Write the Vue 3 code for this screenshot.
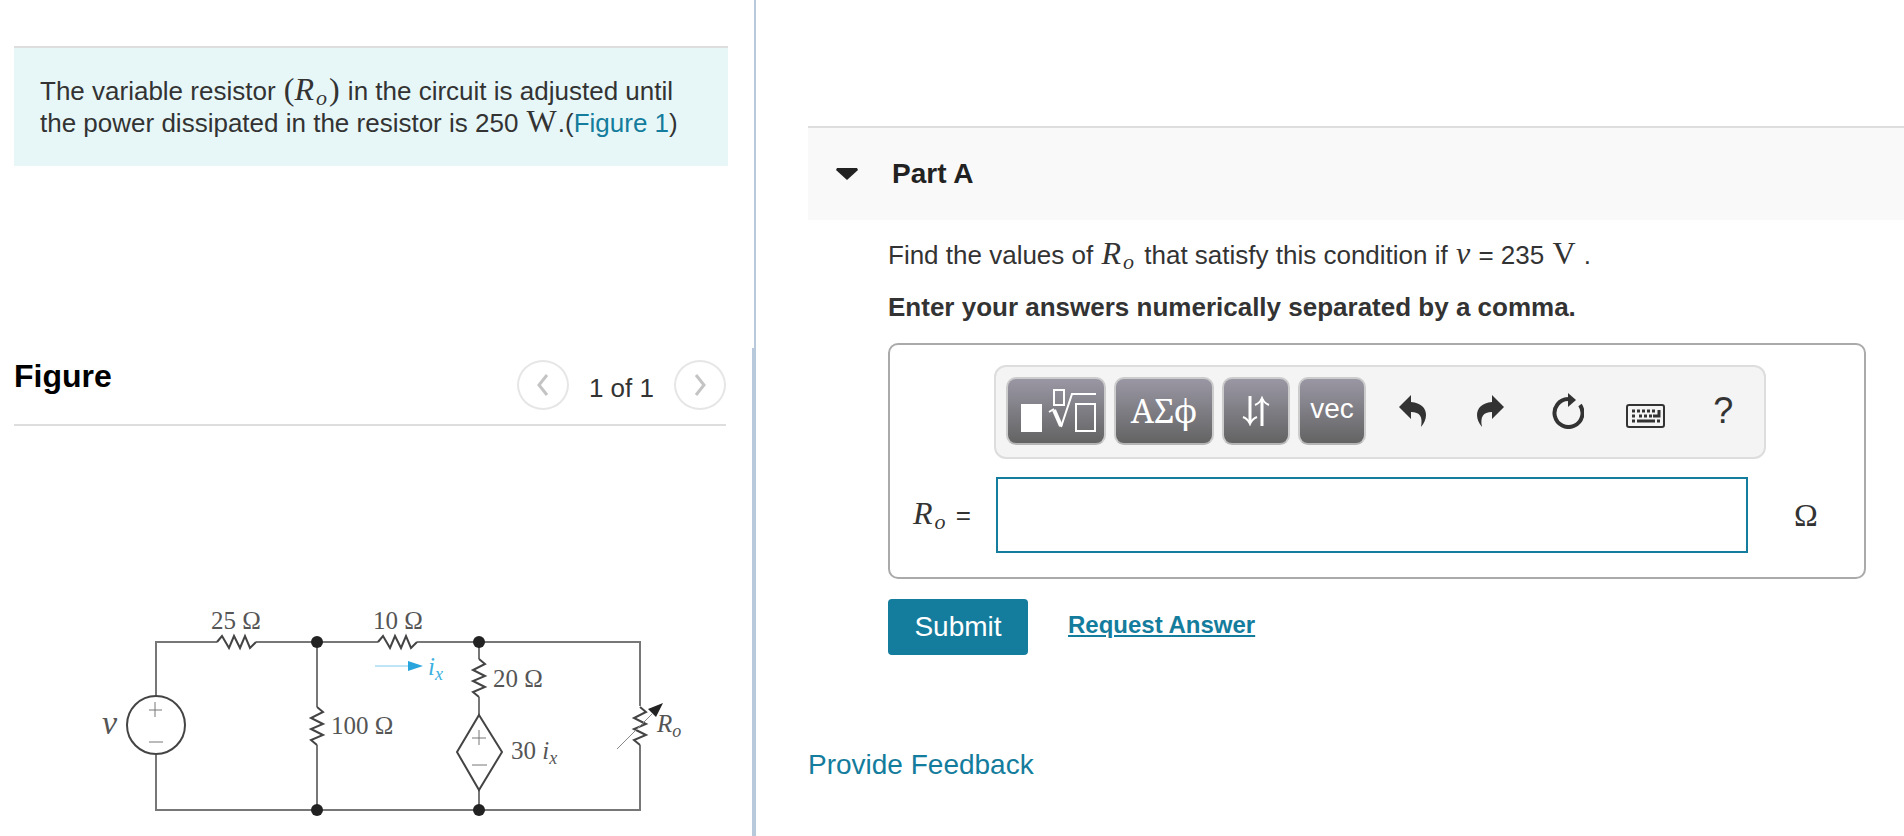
<template>
  <div class="page">
    <aside class="left-pane">
      <section class="problem-panel">
        <p class="problem">
          The variable resistor <span class="math"><span class="paren">(</span><i>R</i><sub>o</sub><span class="paren">)</span></span> in the circuit is adjusted until the power dissipated in the resistor is 250 <span class="math">W</span>.(<a href="#figure">Figure 1</a>)
        </p>
      </section>

      <section id="figure" class="figure-panel">
        <header class="figure-header">
          <h2>Figure</h2>
          <nav class="pager" aria-label="Figures">
            <button type="button" aria-label="Previous figure" @click="prevFigure">
              <svg width="16" height="24" viewBox="0 0 16 24"><path d="M12 2 L4 12 L12 22" /></svg>
            </button>
            <span>{{ figure }} of {{ figureCount }}</span>
            <button type="button" aria-label="Next figure" @click="nextFigure">
              <svg width="16" height="24" viewBox="0 0 16 24"><path d="M4 2 L12 12 L4 22" /></svg>
            </button>
          </nav>
        </header>

        <svg class="circuit" viewBox="14 580 712 250" role="img" aria-label="Circuit diagram">
          <!-- Wires -->
          <g class="wire">
            <path d="M156 697 V643 H217 M256 643 H378 M417 643 H640 V707 M640 746 V811 H156 V756" />
            <path d="M317 643 V708 M317 746 V811 M479 643 V660 M479 698 V716 M479 791 V811" />
          </g>

          <!-- Resistors -->
          <g class="part">
            <path v-for="r in horizontalResistors" :key="r" :transform="`translate(${r} 643)`"
                  d="M0 0 L5 -6 L12 6 L17 -6 L23 6 L28 -6 L33 6 L39 0" />
            <path v-for="r in verticalResistors" :key="r.x" :transform="`translate(${r.x} ${r.y})`"
                  d="M0 0 L6 5 L-6 11 L6 17 L-6 22 L6 28 L-6 33 L0 38" />
            <circle cx="156" cy="726" r="29" />
            <path d="M479 716 L502 753 L479 791 L457 753 Z" />
          </g>

          <!-- Source polarity -->
          <g class="sign">
            <path d="M149 711 H162 M155 703 V718 M149 743 H163" />
            <path d="M472 739 H486 M479 731 V746 M472 766 H487" />
          </g>

          <circle v-for="n in nodes" :key="`${n.x}-${n.y}`" class="node" :cx="n.x" :cy="n.y" r="6" />

          <!-- Current arrow -->
          <path class="current-line" d="M375 667 H410" />
          <path class="current-head" d="M408 662 L423 667 L408 672 Z" />

          <!-- Variable resistor arrow -->
          <path class="adjust-line" d="M617 750 L652 715" />
          <path class="node" d="M663 704 L648 710 L656 718 Z" />

          <text x="211" y="630">25 Ω</text>
          <text x="373" y="630">10 Ω</text>
          <text x="331" y="735">100 Ω</text>
          <text x="493" y="688">20 Ω</text>
          <text x="511" y="760">30 <tspan class="it">i</tspan><tspan class="it small" dy="5">x</tspan></text>
          <text x="657" y="733"><tspan class="it">R</tspan><tspan class="it small" dy="5">o</tspan></text>
          <text class="current" x="428" y="676"><tspan class="it">i</tspan><tspan class="it small" dy="5">x</tspan></text>
          <text class="source" x="102" y="735">v</text>
        </svg>
      </section>
    </aside>

    <main class="right-pane">
      <header class="part-header">
        <button type="button" class="toggle" aria-label="Collapse Part A">
          <svg width="22" height="12" viewBox="0 0 22 12"><path d="M1 0 H21 L22 2 L11 12 L0 2 Z" /></svg>
        </button>
        <h2>Part A</h2>
      </header>

      <div class="part-body">
        <p>
          Find the values of <span class="math"><i>R</i><sub>o</sub></span> that satisfy this condition if <span class="math"><i>v</i></span> = 235 <span class="math">V</span> .
        </p>
        <p><b>Enter your answers numerically separated by a comma.</b></p>

        <form class="answer" @submit.prevent>
          <div class="answer-box">
            <div class="toolbar">
              <button type="button" class="key wide" aria-label="Templates">
                <svg width="80" height="44" viewBox="-2 0 80 44">
                  <rect x="3" y="15" width="21" height="28" fill="#fff" />
                  <g fill="none" stroke="#fff" stroke-width="2">
                    <rect x="36" y="1" width="10" height="15" />
                    <rect x="58" y="15" width="19" height="27" />
                    <path d="M31 23 L36 20" />
                    <path d="M43 38 L54 5 H78" />
                    <path d="M36 21 L43 37" stroke-width="4" />
                  </g>
                </svg>
              </button>
              <button type="button" class="key wide greek">ΑΣϕ</button>
              <button type="button" class="key" aria-label="Sub and superscript">
                <svg width="28" height="30" viewBox="0 0 28 30" fill="none" stroke="#fff">
                  <path d="M8 0 V27 M20 3 V30" stroke-width="3" />
                  <path d="M1 21 Q6 23 8 28 Q10 23 15 21 M13 9 Q18 7 20 2 Q22 7 27 9" stroke-width="2" />
                </svg>
              </button>
              <button type="button" class="key vec">vec</button>

              <div class="tools">
                <button type="button" aria-label="Undo">
                  <svg width="28" height="32" viewBox="0 0 28 32"><path d="M0 12 L12 0 V7 C22 8 27 13 27 20 Q27 26 22 32 C24 22 21 17 12 17 V24 Z" /></svg>
                </button>
                <button type="button" aria-label="Redo">
                  <svg width="28" height="32" viewBox="0 0 28 32"><path d="M28 12 L16 0 V7 C6 8 1 13 1 20 Q1 26 6 32 C4 22 7 17 16 17 V24 Z" /></svg>
                </button>
                <button type="button" aria-label="Reset">
                  <svg width="32" height="36" viewBox="0 0 32 36">
                    <path d="M28 12 A14 14 0 1 1 16 6" fill="none" stroke="#333" stroke-width="4" />
                    <path d="M16 0 L24 7 L16 14 Z" />
                  </svg>
                </button>
                <button type="button" class="keyboard" aria-label="Keyboard">
                  <svg width="40" height="24" viewBox="0 0 40 24">
                    <rect x="1" y="1" width="37" height="22" rx="2" fill="none" stroke="#333" stroke-width="2" />
                    <path d="M6 7 H30" stroke="#333" stroke-width="3" stroke-dasharray="3 2" />
                    <path d="M6 12 H11 M13 12 H28" stroke="#333" stroke-width="3" stroke-dasharray="3 2" />
                    <path d="M27 12 H33 V6 M6 17 H9 M11 17 H29 M31 17 H34" fill="none" stroke="#333" stroke-width="3" />
                  </svg>
                </button>
                <button type="button" class="help" aria-label="Help">?</button>
              </div>
            </div>

            <div class="answer-row">
              <label for="answer"><span class="math"><i>R</i><sub>o</sub></span> =</label>
              <input id="answer" v-model="answer" type="text" autocomplete="off" />
              <span class="math unit">Ω</span>
            </div>
          </div>

          <div class="actions">
            <button type="submit" class="submit">Submit</button>
            <a href="#answer" class="request">Request Answer</a>
          </div>
        </form>
      </div>

      <a href="#feedback" class="feedback">Provide Feedback</a>
    </main>
  </div>
</template>

<script setup>
import { ref } from 'vue';

const answer = ref('');
const figure = ref(1);
const figureCount = 1;

const prevFigure = () => {
  if (figure.value > 1) figure.value--;
};

const nextFigure = () => {
  if (figure.value < figureCount) figure.value++;
};

// Start points of the zigzags
const horizontalResistors = [217, 378];
const verticalResistors = [
  { x: 317, y: 708 },
  { x: 479, y: 660 },
  { x: 640, y: 708 }
];

const nodes = [
  { x: 317, y: 643 },
  { x: 479, y: 643 },
  { x: 317, y: 811 },
  { x: 479, y: 811 }
];
</script>

<style>
body {
  margin: 0;
  background: #fff;
}
</style>

<style scoped>
* {
  box-sizing: border-box;
}

.page {
  display: grid;
  grid-template-columns: 27fr 41fr;
  min-height: 100vh;
  font-family: "Liberation Sans", Arial, sans-serif;
  font-size: 26px;
  line-height: 32px;
  color: #333;
}

h2,
p {
  margin: 0;
}

a {
  color: #147c9c;
  text-decoration: none;
}

button {
  padding: 0;
  border: 0;
  background: none;
  font: inherit;
  color: inherit;
  cursor: pointer;
}

svg {
  display: block;
}

.math {
  padding: 0 1px;
  font-family: "Liberation Serif", "Times New Roman", serif;
  font-size: 32px;
  line-height: 24px;
}

.math sub {
  padding: 0 2px;
  font-size: 22px;
  font-style: italic;
  line-height: 0;
  vertical-align: -5px;
}

/* Left pane */
.left-pane {
  display: flex;
  flex-direction: column;
  min-width: 0;
}

.problem-panel {
  min-height: 348px;
  padding: 46px 26px 0 14px;
  border-right: 2px solid #b9c9dc;
}

.problem {
  padding: 27px 24px 27px 26px;
  border-top: 2px solid #dedede;
  background: #e7f7f8;
}

.figure-panel {
  flex: 1;
  padding: 0 26px 0 14px;
  border-right: 4px solid #b9c9dc;
}

.figure-header {
  display: flex;
  justify-content: space-between;
  height: 78px;
  padding-top: 12px;
  border-bottom: 2px solid #dedede;
}

.figure-header h2 {
  font-size: 32px;
  color: #000;
}

.pager {
  display: flex;
  gap: 20px;
}

.pager span {
  padding-top: 12px;
}

.pager button {
  display: flex;
  align-items: center;
  justify-content: center;
  width: 52px;
  height: 50px;
  border: 2px solid #e6e6e6;
  border-radius: 50%;
}

.pager path {
  fill: none;
  stroke: #c4c4c4;
  stroke-width: 3;
}

/* Circuit */
.circuit {
  width: 100%;
  margin-top: 153px;
}

.wire,
.part,
.sign {
  fill: none;
  stroke: #777;
  stroke-width: 2;
}

.part {
  stroke: #444;
}

.sign {
  stroke-width: 1;
}

.node {
  fill: #222;
}

.current-line {
  stroke: #7cc8ea;
  stroke-width: 1;
}

.current-head {
  fill: #27a5dc;
}

.adjust-line {
  stroke: #888;
  stroke-width: 1;
}

.circuit text {
  font-family: "Liberation Serif", "Times New Roman", serif;
  font-size: 25px;
  fill: #555;
}

.circuit .it {
  font-style: italic;
}

.circuit .small {
  font-size: 18px;
}

.circuit .current {
  fill: #3bb0e0;
}

.circuit .source {
  font-size: 34px;
  font-style: italic;
}

/* Right pane */
.right-pane {
  min-width: 0;
  padding: 126px 0 0 52px;
}

.part-header {
  display: flex;
  align-items: center;
  height: 94px;
  padding-left: 28px;
  border-top: 2px solid #dedede;
  background: #f9f9f9;
}

.part-header h2 {
  margin-left: 34px;
  font-size: 28px;
  color: #222;
}

.toggle path {
  fill: #222;
}

.part-body {
  padding: 19px 38px 0 80px;
}

.part-body p {
  margin-bottom: 20px;
}

.answer-box {
  padding: 20px 0 24px;
  border: 2px solid #aaa;
  border-radius: 10px;
}

.toolbar {
  display: flex;
  gap: 8px;
  margin: 0 98px 18px 104px;
  padding: 10px 2px 12px 10px;
  border: 2px solid #ddd;
  border-radius: 12px;
  background: #f4f4f4;
}

.key {
  display: flex;
  flex: none;
  align-items: center;
  justify-content: center;
  width: 68px;
  height: 68px;
  border: 2px solid #ccc;
  border-bottom-color: #b5b5b5;
  border-radius: 10px;
  background: linear-gradient(#9a97a4, #636363);
  color: #fff;
}

.key.wide {
  width: 100px;
}

.greek {
  font-family: "Noto Serif", "DejaVu Serif", serif;
  font-size: 33px;
}

.vec {
  padding-bottom: 4px;
  font-size: 28px;
}

.tools {
  display: flex;
  flex: 1;
}

.tools button {
  display: flex;
  flex: 1;
  align-items: center;
  justify-content: center;
}

.tools svg {
  fill: #333;
}

.tools .keyboard {
  padding-top: 10px;
}

.tools .help {
  font-size: 36px;
}

.answer-row {
  display: flex;
  align-items: center;
}

.answer-row label {
  width: 106px;
  padding-left: 22px;
}

.answer-row input {
  flex: 1;
  min-width: 0;
  height: 76px;
  padding: 0 12px;
  border: 2px solid #147c9c;
  border-radius: 0;
  outline: none;
  background: #fff;
  font: inherit;
  color: inherit;
}

.unit {
  width: 116px;
  text-align: center;
}

.actions {
  display: flex;
  gap: 40px;
  margin-top: 20px;
}

.submit {
  width: 140px;
  height: 56px;
  border-radius: 4px;
  background: #147c9c;
  font-size: 28px;
  color: #fff;
}

.request {
  padding-top: 10px;
  font-size: 24px;
  font-weight: bold;
  text-decoration: underline;
}

.feedback {
  display: inline-block;
  margin-top: 94px;
  font-size: 28px;
}
</style>
